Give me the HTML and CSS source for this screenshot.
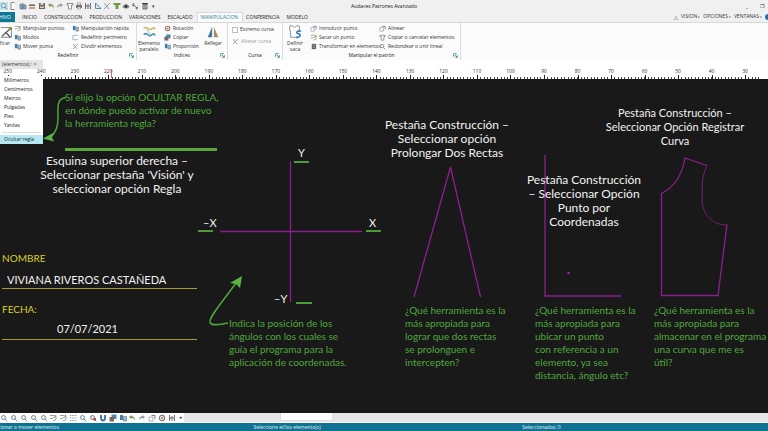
FILE: index.html
```html
<!DOCTYPE html>
<html lang="es">
<head>
    <meta charset="UTF-8">
    <meta name="viewport" content="width=device-width, initial-scale=1.0">
    <title>Audaces Patrones Avanzado</title>
    <link rel="stylesheet" href="styles.css">
</head>
<body>
    <svg class="sprite" aria-hidden="true">
        <symbol id="i-page" viewBox="0 0 8 8"><path d="M5.500 .5H2v7h3.500" fill="#fff" stroke="#888"/></symbol>
        <symbol id="i-new" viewBox="0 0 8 8"><path d="M1 2h3v5H1zM4 3h3v4H4z" fill="#7aa3bd" stroke="#56788e" stroke-width=".6"/><path d="M3 1l3 2" stroke="#c9965c"/></symbol>
        <symbol id="i-folder" viewBox="0 0 8 8"><path d="M1 2h6v1H1zM1 5h6v2H1z" fill="#c99b78"/><path d="M1 3.500h6" stroke="#666"/></symbol>
        <symbol id="i-save" viewBox="0 0 8 8"><path d="M1 1h6v6H1z" fill="#666"/><path d="M2.500 1h3v2h-3zM2 4.500h4V6H2z" fill="#e8c8b8"/></symbol>
        <symbol id="i-undo" viewBox="0 0 8 8"><path d="M1 3l2.500-2v1.300C6 2.300 7 4 7 6.500 6 4.500 5 4 3.500 4v1.200z" fill="#7a9a4a"/></symbol>
        <symbol id="i-redo" viewBox="0 0 8 8"><path d="M7 3L4.500 1v1.300C2 2.300 1 4 1 6.500 2 4.500 3 4 4.500 4v1.200z" fill="#9a9a9a"/></symbol>
        <symbol id="i-shirt" viewBox="0 0 8 8"><path d="M1 1.500h6V3H5.500v4h-3V3H1z" fill="#fff" stroke="#777" stroke-width=".8"/></symbol>
        <symbol id="i-shirtg" viewBox="0 0 8 8"><path d="M.5 1h7v2H5.500v4h-3V3h-2z" fill="#6f9c3d"/></symbol>
        <symbol id="i-print" viewBox="0 0 8 8"><path d="M1 3h6v3H1z" fill="#777"/><path d="M2.500 1h3v2h-3zM2.500 5h3v2h-3z" fill="#fff" stroke="#777" stroke-width=".6"/></symbol>
        <symbol id="i-align" viewBox="0 0 8 8"><path d="M1.500 1v6M4 2v5M6.500 1v6" stroke="#6b6b6b"/><path d="M2 4h5" stroke="#9a9a9a" stroke-width="2"/></symbol>
        <symbol id="i-ruler" viewBox="0 0 8 8"><path d="M1.500 1v5.500H7z" fill="#dbe8f2" stroke="#4d7fa3" stroke-width=".9"/></symbol>
        <symbol id="i-rotate" viewBox="0 0 8 8"><circle cx="4" cy="4" r="2.600" fill="none" stroke="#9b6f63" stroke-width="1.200"/><circle cx="4" cy="4" r="1" fill="#777"/></symbol>
        <symbol id="i-eye" viewBox="0 0 8 8"><path d="M.5 5C2 1 6 1 7.500 5 5.500 7 2.500 7 .5 5z" fill="#888"/><circle cx="4" cy="4.500" r="1.200" fill="#222"/></symbol>
        <symbol id="i-links" viewBox="0 0 8 8"><path d="M1.500 2l5 4.500M2 1l1 2-2 1M7 5L5 6l1 1.500" stroke="#666" fill="none"/></symbol>
        <symbol id="i-trash" viewBox="0 0 8 8"><path d="M1 1.500h6" stroke="#444"/><path d="M2 2.500h4V7H2z" fill="#ddd" stroke="#444" stroke-width=".8"/><path d="M4 3v3.500" stroke="#555"/></symbol>
        <symbol id="i-zoom" viewBox="0 0 8 8"><circle cx="3.500" cy="3.500" r="2" fill="#eef5f8" stroke="#7b8b95"/><path d="M5 5l2.300 2.300" stroke="#7b8b95"/></symbol>
        <symbol id="i-zoomr" viewBox="0 0 8 8"><circle cx="3.500" cy="3.500" r="2" fill="#dfe8ee" stroke="#777"/><path d="M5 5l2.300 2.300" stroke="#777"/><path d="M4.500 4h2.500v2.500H4.500z" fill="#b4453c"/></symbol>
        <symbol id="i-grid" viewBox="0 0 8 8"><path d="M1 1.500h7M1 4h7M1 6.500h7" stroke="#6c93a8" stroke-dasharray="1.200 1"/></symbol>
        <symbol id="i-magnet" viewBox="0 0 8 8"><path d="M2 1v3.500a2 2 0 0 0 4 0V1" fill="none" stroke="#34709c" stroke-width="1.800"/></symbol>
        <symbol id="i-box" viewBox="0 0 8 8"><path d="M1 3h4v4H1z" fill="#fff" stroke="#999" stroke-width=".8"/><path d="M3.500 1.500H7V5" fill="none" stroke="#4f8aae"/></symbol>
        <symbol id="i-points" viewBox="0 0 8 8"><path d="M1 1.500h4.500M1 4.500h2l4-2v3L4 7" fill="none" stroke="#829a8d" stroke-width=".9"/><circle cx="6.500" cy="2" r="1" fill="#d28b45"/></symbol>
        <symbol id="i-blue" viewBox="0 0 8 8"><path d="M1 1h3v5H1z" fill="#3f7fb0"/><path d="M4.500 2.500h3v4.500h-3z" fill="#9ebdd0" stroke="#555" stroke-width=".5"/></symbol>
        <symbol id="i-frame" viewBox="0 0 8 8"><path d="M7 1.500H1v5h6" fill="none" stroke="#8eacbd" stroke-width=".9"/></symbol>
        <symbol id="i-cut" viewBox="0 0 8 8"><path d="M1 7l6-6M2 2l4 5" stroke="#8b9da7" fill="none"/><circle cx="2" cy="2" r="1" fill="#b1c6d1"/></symbol>
        <symbol id="i-copy" viewBox="0 0 8 8"><path d="M2.500 .5h5V5h-5z" fill="#4a8ab8"/><path d="M.5 3H5v4.500H.5z" fill="#80665a"/></symbol>
        <symbol id="i-dark" viewBox="0 0 8 8"><path d="M2 1h5v6H2z" fill="#5d656a"/><path d="M3 3h3M3 5h3" stroke="#bbb" stroke-width=".6"/></symbol>
        <symbol id="i-launch" viewBox="0 0 8 8"><path d="M6 1H1v5M3 3l3.500 3.500M7 3.500V7H3.500" fill="none" stroke="#2b7685" stroke-width="1.200"/></symbol>
        <symbol id="i-modify" viewBox="0 0 16 16"><path d="M1 3h12v11H1" fill="#fff" stroke="#777"/><path d="M2 13L12 4M6 8l6 6" stroke="#555" stroke-width="1.500"/><circle cx="12" cy="4" r="2" fill="#7ea03f"/></symbol>
        <symbol id="i-waves" viewBox="0 0 16 16"><path d="M2 4c4-4 5 3 8 1s3-3 5 0" fill="none" stroke="#d0b764" stroke-width="1.800"/><path d="M2 11c4-4 5 3 8 1s3-3 5 0" fill="none" stroke="#4d93bd" stroke-width="1.800"/><path d="M5 5l5 6" stroke="#8fb5b1"/></symbol>
        <symbol id="i-mirror" viewBox="0 0 16 16"><path d="M7 2v12H2z" fill="#46779c"/><path d="M9 2v12h5z" fill="#a88a6c"/></symbol>
        <symbol id="i-define" viewBox="0 0 16 16"><path d="M2 1h3c1 2 4 2 5 0h3v5h-2M2 1v6h1v7h6" fill="#fff" stroke="#7f8b92"/><path d="M15 7c-6-1-6 3-3 3s3 5-3 4" fill="none" stroke="#2f82bd" stroke-width="1.800"/></symbol>
    </svg>

    <header class="title-bar">
        <div class="quick-access">
            <button class="icon-btn app-btn" aria-label="Audaces"><svg><use href="#i-zoom"/></svg></button>
            <button class="icon-btn" aria-label="Nuevo"><svg><use href="#i-page"/></svg></button>
            <button class="icon-btn" aria-label="Nuevo molde"><svg><use href="#i-new"/></svg></button>
            <button class="icon-btn" aria-label="Abrir"><svg><use href="#i-folder"/></svg></button>
            <button class="icon-btn" aria-label="Guardar"><svg><use href="#i-save"/></svg></button>
            <button class="icon-btn" aria-label="Deshacer"><svg><use href="#i-undo"/></svg></button>
            <button class="icon-btn" aria-label="Rehacer"><svg><use href="#i-redo"/></svg></button>
            <button class="icon-btn" aria-label="Molde"><svg><use href="#i-shirt"/></svg></button>
            <button class="icon-btn" aria-label="Imprimir"><svg><use href="#i-print"/></svg></button>
            <button class="icon-btn" aria-label="Alinear"><svg><use href="#i-align"/></svg></button>
            <button class="icon-btn" aria-label="Escuadra"><svg><use href="#i-ruler"/></svg></button>
            <button class="icon-btn" aria-label="Medir"><svg><use href="#i-cut"/></svg></button>
            <button class="icon-btn" aria-label="Prenda"><svg><use href="#i-shirtg"/></svg></button>
            <button class="icon-btn" aria-label="Ver"><svg><use href="#i-eye"/></svg></button>
            <button class="icon-btn" aria-label="Vincular"><svg><use href="#i-links"/></svg></button>
            <button class="icon-btn" aria-label="Borrar"><svg><use href="#i-trash"/></svg></button>
            <button class="icon-btn more-btn" aria-label="Personalizar">▾</button>
        </div>
        <h1 class="app-title">Audaces Patrones Avanzado</h1>
        <div class="window-controls">
            <button class="window-btn" aria-label="Minimizar">_</button>
            <button class="window-btn" aria-label="Restaurar">❐</button>
        </div>
    </header>

    <nav class="tabs">
        <button class="tab tab-file">ARCHIVO</button>
        <button class="tab tab-home">INICIO</button>
        <button class="tab">CONSTRUCCION</button>
        <button class="tab">PRODUCCION</button>
        <button class="tab">VARIACIONES</button>
        <button class="tab">ESCALADO</button>
        <button class="tab tab-active">MANIPULACION</button>
        <button class="tab">CONFERENCIA</button>
        <button class="tab">MODELO</button>
        <div class="tab-menus">
            <button class="tab-menu">△</button>
            <button class="tab-menu">VISION<i>▾</i></button>
            <button class="tab-menu">OPCIONES<i>▾</i></button>
            <button class="tab-menu">VENTANAS<i>▾</i></button>
            <span class="help-dot"></span>
        </div>
    </nav>

    <section class="ribbon">
        <div class="group group-redefine">
            <div class="tools">
                <button class="big-tool"><svg><use href="#i-modify"/></svg>Modificar</button>
                <div class="tool-list">
                    <button class="tool"><svg><use href="#i-points"/></svg>Manipular puntos</button>
                    <button class="tool"><svg><use href="#i-blue"/></svg>Modos</button>
                    <button class="tool"><svg><use href="#i-blue"/></svg>Mover punta</button>
                </div>
                <div class="tool-list">
                    <button class="tool"><svg><use href="#i-blue"/></svg>Manipulación rápida</button>
                    <button class="tool"><svg><use href="#i-frame"/></svg>Redefinir perímetro</button>
                    <button class="tool"><svg><use href="#i-cut"/></svg>Dividir elementos</button>
                </div>
            </div>
            <div class="group-name">Redefinir<svg><use href="#i-launch"/></svg></div>
        </div>
        <div class="group group-insert">
            <div class="tools">
                <button class="big-tool"><svg><use href="#i-waves"/></svg>Elemento paralelo</button>
                <div class="tool-list">
                    <button class="tool"><svg><use href="#i-rotate"/></svg>Rotación</button>
                    <button class="tool"><svg><use href="#i-copy"/></svg>Copiar</button>
                    <button class="tool"><svg><use href="#i-blue"/></svg>Proporción</button>
                </div>
                <button class="big-tool"><svg><use href="#i-mirror"/></svg>Reflejar</button>
            </div>
            <div class="group-name">Indices<svg><use href="#i-launch"/></svg></div>
        </div>
        <div class="group group-curve">
            <div class="tools">
                <div class="tool-list">
                    <label class="tool"><input type="checkbox" class="tick">Extremo curva</label>
                    <button class="tool tool-off"><svg><use href="#i-cut"/></svg>Alterar curva</button>
                </div>
            </div>
            <div class="group-name">Curva<svg><use href="#i-launch"/></svg></div>
        </div>
        <div class="group group-pattern">
            <div class="tools">
                <button class="big-tool"><svg><use href="#i-define"/></svg>Definir saca</button>
                <div class="tool-list">
                    <button class="tool"><svg><use href="#i-box"/></svg>Introducir punto</button>
                    <button class="tool"><svg><use href="#i-points"/></svg>Sacar un punto</button>
                    <button class="tool"><svg><use href="#i-dark"/></svg>Transformar en elementos</button>
                </div>
                <div class="tool-list">
                    <button class="tool"><svg><use href="#i-box"/></svg>Alinear</button>
                    <button class="tool"><svg><use href="#i-shirt"/></svg>Copiar o cancelar elementos</button>
                    <button class="tool"><svg><use href="#i-zoom"/></svg>Redondear o unir lineal</button>
                </div>
            </div>
            <div class="group-name">Manipular el patrón<svg><use href="#i-launch"/></svg></div>
        </div>
    </section>

    <div class="ruler-area">
        <div class="doc-tab">(elementos) : ×</div>
        <div class="ruler">
            <span>250</span><span>240</span><span>230</span><span>220</span><span>210</span><span>200</span>
            <span>190</span><span>180</span><span>170</span><span>160</span><span>150</span><span>140</span>
            <span>130</span><span>120</span><span>110</span><span>100</span><span>90</span><span>80</span>
            <span>70</span><span>60</span><span>50</span><span>40</span><span>30</span>
        </div>
        <i class="ruler-mark"></i>
    </div>

    <main class="canvas">
        <svg class="drawing" viewBox="0 79 768 334" aria-hidden="true">
            <!-- axes, angle, corner and bodice -->
            <g fill="none" stroke="#8c1f8f" stroke-width="1.300">
                <path d="M290.500 161v141M220 231.500h142"/>
                <path d="M414 297L450.500 167 480.500 297"/>
                <path d="M545 155v141h76"/>
                <path d="M661.500 193v102.500H718l9-71"/>
                <path d="M661.500 193.500c14-7 21-20 23.500-35.500l22 7.500"/>
                <path d="M707 165.500c-7 14-4 28-5 36 1 14 12 24 25 23.500" stroke-width=".8"/>
            </g>
            <circle cx="568.500" cy="273" r="1.200" fill="#a329a5"/>
            <!-- underlines -->
            <path d="M65 149.500h152" stroke="#5aa83c" stroke-width="3"/>
            <path d="M294 162h15M198 231h15M366 231h15M296 303h16" stroke="#499c38" stroke-width="2"/>
            <!-- arrows -->
            <g fill="none" stroke="#4fa43c" stroke-width="1.500">
                <path d="M66 97.500c-10 1-8 11-8 21s-4 16-8 19"/>
                <path d="M228 323c-7 1-17 4-18-1s13-21 26-39"/>
            </g>
            <path d="M43 138.500l11-6-2 5 2 4zM242 276l-2 12-4-4-6-1z" fill="#5bb545"/>
        </svg>

        <p class="ask ask-ruler">Si elijo la opción OCULTAR REGLA,<br>en dónde puedo activar de nuevo<br>la herramienta regla?</p>
        <p class="answer answer-ruler">Esquina superior derecha –<br>Seleccionar pestaña 'Visión' y<br>seleccionar opción Regla</p>

        <form class="student">
            <label for="nombre">NOMBRE</label>
            <input id="nombre" class="name-input" type="text" value="VIVIANA RIVEROS CASTAÑEDA">
            <label for="fecha">FECHA:</label>
            <input id="fecha" class="date-input" type="text" value="07/07/2021">
        </form>

        <span class="axis axis-top">Y</span>
        <span class="axis axis-right">X</span>
        <span class="axis axis-left">–X</span>
        <span class="axis axis-bottom">–Y</span>
        <p class="ask ask-axes">Indica la posición de los<br>ángulos con los cuales se<br>guía el programa para la<br>aplicación de coordenadas.</p>

        <p class="answer answer-lines">Pestaña Construcción –<br>Seleccionar opción<br>Prolongar Dos Rectas</p>
        <p class="ask ask-lines">¿Qué herramienta es la<br>más apropiada para<br>lograr que dos rectas<br>se prolonguen e<br>intercepten?</p>

        <p class="answer answer-point">Pestaña Construcción<br>– Seleccionar Opción<br>Punto por<br>Coordenadas</p>
        <p class="ask ask-point">¿Qué herramienta es la<br>más apropiada para<br>ubicar un punto<br>con referencia a un<br>elemento, ya sea<br>distancia, ángulo etc?</p>

        <p class="answer answer-small answer-curve">Pestaña Construcción –<br>Seleccionar Opción Registrar<br>Curva</p>
        <p class="ask ask-curve">¿Qué herramienta es la<br>más apropiada para<br>almacenar en el programa<br>una curva que me es<br>útil?</p>

        <div class="unit-menu">
            <button>Milímetros</button>
            <button>Centímetros</button>
            <button>Metros</button>
            <button>Pulgadas</button>
            <button>Pies</button>
            <button>Yardas</button>
            <hr>
            <button class="selected">Ocultar regla</button>
        </div>
    </main>

    <div class="bottom-bar">
        <div class="view-tools">
            <button class="icon-btn" aria-label="Zoom"><svg><use href="#i-zoom"/></svg></button>
            <button class="icon-btn" aria-label="Acercar"><svg><use href="#i-zoom"/></svg></button>
            <button class="icon-btn" aria-label="Alejar"><svg><use href="#i-zoom"/></svg></button>
            <button class="icon-btn" aria-label="Zoom anterior"><svg><use href="#i-zoom"/></svg></button>
            <button class="icon-btn" aria-label="Zoom total"><svg><use href="#i-zoom"/></svg></button>
            <button class="icon-btn" aria-label="Puntos"><svg><use href="#i-points"/></svg></button>
            <button class="icon-btn" aria-label="Mover"><svg><use href="#i-points"/></svg></button>
            <button class="icon-btn" aria-label="Cuadrícula"><svg><use href="#i-grid"/></svg></button>
            <button class="icon-btn" aria-label="Buscar"><svg><use href="#i-zoom"/></svg></button>
            <button class="icon-btn" aria-label="Quitar"><svg><use href="#i-zoomr"/></svg></button>
            <button class="icon-btn" aria-label="Imán"><svg><use href="#i-magnet"/></svg></button>
            <button class="icon-btn" aria-label="Capas"><svg><use href="#i-copy"/></svg></button>
            <button class="icon-btn" aria-label="Modos"><svg><use href="#i-blue"/></svg></button>
            <button class="icon-btn" aria-label="Girar izquierda"><svg><use href="#i-undo"/></svg></button>
            <button class="icon-btn" aria-label="Girar derecha"><svg><use href="#i-redo"/></svg></button>
            <button class="icon-btn" aria-label="Insertar"><svg><use href="#i-box"/></svg></button>
            <button class="icon-btn" aria-label="Rotar"><svg><use href="#i-rotate"/></svg></button>
            <button class="icon-btn" aria-label="Alinear"><svg><use href="#i-align"/></svg></button>
            <button class="icon-btn more-btn" aria-label="Anterior">◂</button>
        </div>
        <div class="scroll-track"><div class="scroll-thumb"></div></div>
    </div>

    <footer class="status">
        <span>Seleccionar o mover elementos</span>
        <span>Seleccione el/los elemento(s)</span>
        <span>Seleccionados: 0</span>
    </footer>
</body>
</html>
```
FILE: styles.css
```css
* {
    box-sizing: border-box;
}
body {
    margin: 0;
    min-height: 100vh;
    display: flex;
    flex-direction: column;
    overflow: hidden;
    background-color: #fff;
    color: #333;
    font-family: "Open Sans", "Noto Sans", sans-serif;
    font-size: 5px;
    line-height: 7px;
}
button {
    border: none;
    padding: 0;
    background: none;
    color: inherit;
    font: inherit;
    cursor: pointer;
    white-space: nowrap;
}
svg {
    display: block;
    flex-shrink: 0;
}
.sprite {
    position: absolute;
    width: 0;
    height: 0;
}

/* title bar */
.title-bar {
    display: grid;
    grid-template-columns: 1fr auto 1fr;
    align-items: center;
    height: 12px;
    background-color: #f0f0f0;
}
.quick-access {
    display: flex;
    justify-content: space-between;
    width: 156px;
}
.icon-btn svg {
    width: 8px;
    height: 8px;
}
.app-btn {
    background-color: #b5e3f0;
}
.more-btn {
    width: 6px;
}
.app-title {
    margin: 0;
    font-size: 5px;
    font-weight: normal;
    color: #111;
}
.window-controls {
    display: flex;
    justify-content: flex-end;
    gap: 12px;
    padding-right: 4px;
}

/* tabs */
.tabs {
    display: flex;
    align-items: stretch;
    height: 11px;
    background-color: #f0f0f0;
    border-bottom: 1px solid #d8d8d8;
}
.tab {
    padding: 0 4px 0 3px;
    color: #222;
}
.tab-file {
    width: 15px;
    padding: 0 4px 0 0;
    display: flex;
    justify-content: flex-end;
    align-items: center;
    background-color: #0d7896;
    color: #fff;
}
.tab-home {
    padding-left: 7px;
}
.tab-active {
    background-color: #fbfbfb;
    border: 1px solid #d8d8d8;
    border-bottom: none;
    color: #2b8299;
}
.tab-menus {
    display: flex;
    align-items: center;
    gap: 3px;
    margin-left: auto;
}
.tab-menu i {
    margin-left: 1px;
    font-size: 3px;
    font-style: normal;
}
.help-dot {
    width: 3px;
    height: 6px;
    border-radius: 3px 0 0 3px;
    background-color: #2c6ea5;
}

/* ribbon */
.ribbon {
    display: flex;
    height: 37px;
    background-color: #fbfbfb;
}
.group {
    display: flex;
    flex-direction: column;
    justify-content: space-between;
    padding: 2px 0 1px;
    border-right: 1px solid #ddd;
}
.group-redefine {
    width: 137px;
}
.group-insert {
    width: 91px;
}
.group-curve {
    width: 55px;
}
.group-pattern {
    width: 178px;
}
.tools {
    display: flex;
    gap: 3px;
    height: 26px;
}
.group-redefine .tools {
    gap: 4px;
}
.group-redefine .big-tool {
    width: 10px;
    display: flex;
    flex-direction: column;
    align-items: flex-end;
}
.group-redefine .tool-list {
    width: 54px;
}
.group-pattern .tool-list {
    width: 66px;
}
.group-insert .tool-list {
    width: 34px;
}
.group-curve .tools {
    padding: 1px 4px;
}
.group-curve .tool-list {
    gap: 5px;
}
.big-tool {
    width: 24px;
    white-space: normal;
    line-height: 6px;
    align-self: flex-start;
}
.big-tool svg {
    width: 14px;
    height: 14px;
    margin: 0 auto 1px;
}
.tool-list {
    display: flex;
    flex-direction: column;
    gap: 2px;
}
.tool {
    display: flex;
    align-items: center;
    gap: 2px;
    white-space: nowrap;
}
.tool svg {
    width: 7px;
    height: 7px;
}
.tool-off {
    color: #999;
}
.tick {
    appearance: none;
    width: 6px;
    height: 6px;
    margin: 0;
    border: 1px solid #bbb;
    background-color: #fff;
}
.group-name {
    display: grid;
    grid-template-columns: 1fr auto 1fr;
    align-items: center;
    height: 7px;
    color: #222;
}
.group-name::before {
    content: "";
}
.group-name svg {
    width: 5px;
    height: 5px;
    margin: 0 2px 0 auto;
}

/* ruler */
.ruler-area {
    position: relative;
    height: 19px;
    overflow: hidden;
}
.doc-tab {
    width: 43px;
    height: 9px;
    padding: 1px 2px;
    background-color: #e6e6e6;
    color: #333;
}
.ruler {
    display: flex;
    height: 10px;
    margin: 0 6px 0 -9px;
}
.ruler span {
    position: relative;
    flex: 1;
    text-align: center;
    line-height: 4px;
    background: repeating-linear-gradient(to right, #444 0 1px, transparent 1px 10%) bottom / 100% 2px no-repeat;
}
.ruler span::after {
    content: "";
    position: absolute;
    left: 50%;
    bottom: 0;
    width: 1px;
    height: 4px;
    background-color: #222;
}
.ruler-mark {
    position: absolute;
    left: 111px;
    bottom: 1px;
    width: 1px;
    height: 9px;
    background-color: #e06060;
}

/* drawing area */
.canvas {
    position: relative;
    flex: 1;
    background-color: #191919;
    font-family: Lato, "Open Sans", sans-serif;
}
.drawing {
    position: absolute;
    left: 0;
    top: 0;
    width: 768px;
    height: 334px;
}
.ask,
.answer,
.axis {
    position: absolute;
    margin: 0;
    white-space: nowrap;
}
.ask {
    color: #4fa83c;
    font-size: 10px;
    line-height: 13px;
}
.answer {
    color: #f2f2f2;
    font-size: 12px;
    line-height: 14px;
    text-align: center;
    transform: translateX(-50%);
}
.answer-small {
    font-size: 11px;
}
.axis {
    color: #f2f2f2;
    font-size: 11px;
    line-height: 14px;
}
.ask-ruler {
    left: 65px;
    top: 12px;
}
.answer-ruler {
    left: 117px;
    top: 75px;
}
.ask-axes {
    left: 229px;
    top: 238px;
}
.answer-lines {
    left: 447px;
    top: 39px;
}
.ask-lines {
    left: 405px;
    top: 225px;
}
.answer-point {
    left: 584px;
    top: 94px;
}
.ask-point {
    left: 535px;
    top: 225px;
}
.answer-curve {
    left: 675px;
    top: 27px;
}
.ask-curve {
    left: 654px;
    top: 225px;
}
.axis-top {
    left: 298px;
    top: 67px;
}
.axis-right {
    left: 369px;
    top: 137px;
}
.axis-left {
    left: 203px;
    top: 137px;
}
.axis-bottom {
    left: 274px;
    top: 213px;
}

/* student data */
.student {
    position: absolute;
    left: 2px;
    top: 172px;
    width: 195px;
    display: flex;
    flex-direction: column;
}
.student label {
    color: #d8d02c;
    font-size: 10px;
    line-height: 14px;
}
.student input {
    height: 24px;
    margin-bottom: 13px;
    padding: 6px 5px 0;
    border: none;
    border-bottom: 1px solid #a89a30;
    background: none;
    color: #f2f2f2;
    font-family: Lato, "Open Sans", sans-serif;
    font-size: 11px;
}
.student .date-input {
    padding: 2px 5px 0 55px;
}

/* unit menu */
.unit-menu {
    position: absolute;
    left: 0;
    top: -3px;
    width: 43px;
    display: flex;
    flex-direction: column;
    background-color: #fff;
    color: #222;
    font-family: "Open Sans", sans-serif;
}
.unit-menu button {
    padding-left: 4px;
    line-height: 9px;
    text-align: left;
}
.unit-menu hr {
    width: 39px;
    margin: 2px 2px;
    border: none;
    border-top: 1px solid #ddd;
}
.unit-menu .selected {
    background-color: #b5e8f4;
}

/* bottom */
.bottom-bar {
    display: flex;
    height: 10px;
    border-bottom: 1px solid #fff;
}
.view-tools {
    display: flex;
    align-items: center;
    justify-content: space-between;
    width: 184px;
}
.scroll-track {
    flex: 1;
    padding-left: 96px;
    background-color: #e6e6e6;
}
.scroll-thumb {
    width: 53px;
    height: 8px;
    background-color: #fff;
    border: 1px solid #ddd;
    border-top: none;
}
.status {
    display: grid;
    grid-template-columns: 33% 35% 1fr;
    height: 8px;
    padding-top: 1px;
    line-height: 6px;
    background-color: #0d7294;
    color: #e6f3f7;
}
.status span:first-child {
    margin-left: -14px;
}
```
